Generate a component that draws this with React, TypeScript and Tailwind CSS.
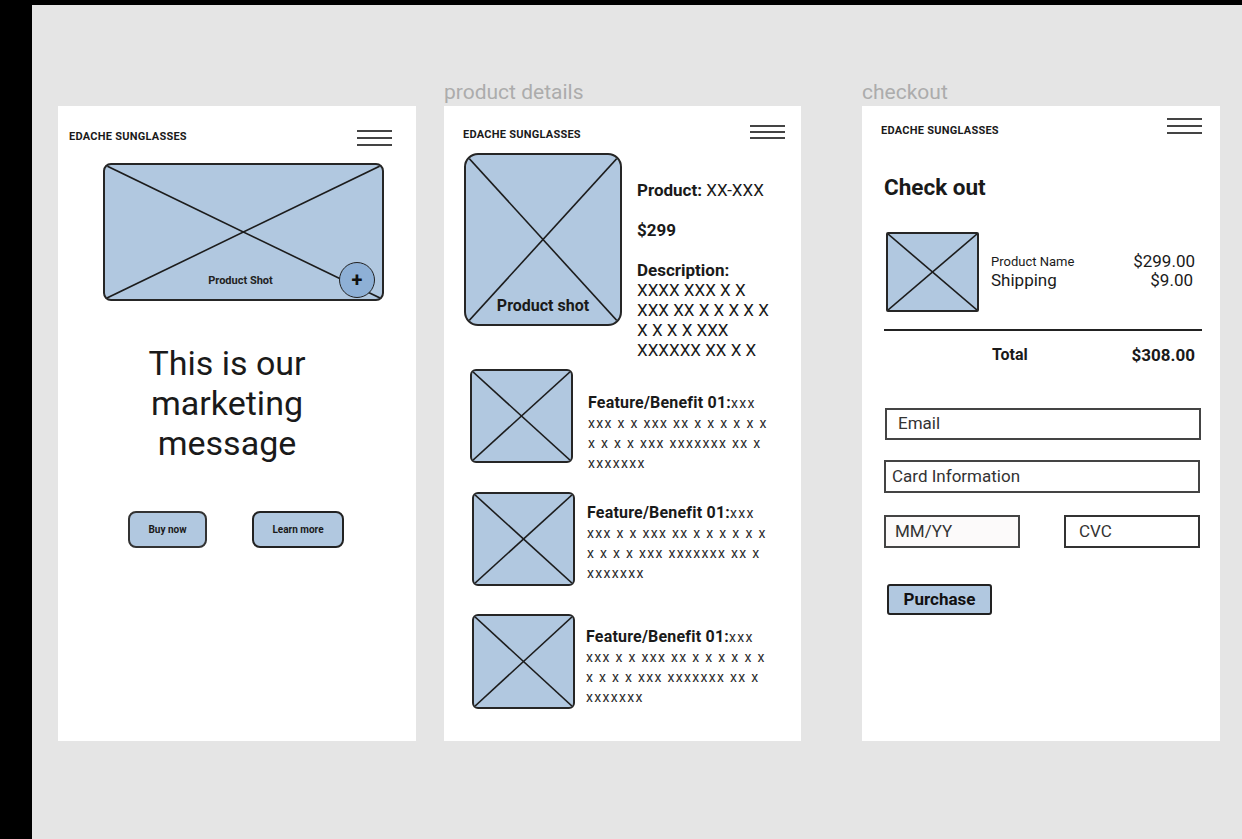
import React from "react";
import clsx from "clsx";

const XBox = ({ className, children }: { className?: string; children?: React.ReactNode }) => (
  <div className={clsx("relative shrink-0 overflow-hidden border-2 border-[#262626] bg-[#b1c8e0]", className)}>
    <svg className="absolute inset-0 h-full w-full" viewBox="0 0 100 100" preserveAspectRatio="none">
      <line x1="0" y1="0" x2="100" y2="100" stroke="#1c1c1c" strokeWidth="1.6" vectorEffect="non-scaling-stroke" />
      <line x1="100" y1="0" x2="0" y2="100" stroke="#1c1c1c" strokeWidth="1.6" vectorEffect="non-scaling-stroke" />
    </svg>
    {children}
  </div>
);

const Hamburger = ({ className }: { className?: string }) => (
  <div className={clsx("flex w-[35px] flex-col", className)}>
    <span className="h-[2px] bg-[#444]" />
    <span className="h-[2px] bg-[#444]" />
    <span className="h-[2px] bg-[#444]" />
  </div>
);

const Brand = ({ className }: { className?: string }) => (
  <span className={clsx("text-[11px] font-bold leading-[13px] tracking-[0.25px] text-[#1a1a1a]", className)}>
    EDACHE SUNGLASSES
  </span>
);

const HomeScreen = () => (
  <div className="flex h-[635px] flex-col bg-white">
    <div className="flex items-start justify-between pl-[11px] pr-[24px]">
      <Brand className="mt-[24px]" />
      <Hamburger className="mt-[24px] gap-[5px]" />
    </div>
    <XBox className="ml-[45px] mt-[17px] h-[138px] w-[281px] rounded-[8px]">
      <span className="absolute inset-x-0 bottom-[11px] pr-[6px] text-center text-[11px] font-bold leading-[14px] text-[#222]">
        Product Shot
      </span>
      <span className="absolute bottom-[1px] right-[7px] flex h-[36px] w-[36px] items-center justify-center rounded-full border-[1.5px] border-[#222] bg-[#8eb0d6] text-[20px] font-bold leading-none text-[#111]">
        +
      </span>
    </XBox>
    <p className="mt-[42px] pr-[20px] text-center text-[34px] leading-[40px] text-[#1a1a1a]">
      This is our
      <br />
      marketing
      <br />
      message
    </p>
    <div className="mt-[48px] flex pl-[70px]">
      <button className="h-[37px] w-[79px] rounded-[8px] border-2 border-[#333] bg-[#b1c8e0] text-[10px] font-bold text-[#1a1a1a]">
        Buy now
      </button>
      <button className="ml-[45px] h-[37px] w-[92px] rounded-[8px] border-2 border-[#222] bg-[#b1c8e0] text-[10px] font-bold text-[#1a1a1a]">
        Learn more
      </button>
    </div>
  </div>
);

const features = [
  { row: "mt-[9px]", box: "ml-[26px] h-[94px]", text: "ml-[15px] mt-[24px]" },
  { row: "mt-[19px]", box: "ml-[28px] h-[94px]", text: "ml-[12px] mt-[11px]" },
  { row: "mt-[28px]", box: "ml-[28px] h-[95px]", text: "ml-[11px] mt-[13px]" },
];

const DetailsScreen = () => (
  <div className="flex h-[635px] flex-col bg-white text-[#1a1a1a]">
    <div className="flex items-start justify-between pl-[19px] pr-[16px]">
      <Brand className="mt-[22px]" />
      <Hamburger className="mt-[19px] gap-[4px]" />
    </div>
    <div className="mt-[12px] flex">
      <XBox className="ml-[20px] h-[173px] w-[158px] rounded-[14px]">
        <span className="absolute inset-x-0 bottom-[8px] text-center text-[16px] font-bold leading-[20px]">
          Product shot
        </span>
      </XBox>
      <div className="ml-[15px] pt-[27px] text-[17px] leading-[20px]">
        <p>
          <span className="font-bold">Product:</span> XX-XXX
        </p>
        <p className="mt-[20px] font-bold">$299</p>
        <p className="mt-[20px] font-bold">Description:</p>
        <p>XXXX XXX X X</p>
        <p>XXX XX X X X X X</p>
        <p>X X X X XXX</p>
        <p>XXXXXX XX X X</p>
      </div>
    </div>
    {features.map((f, i) => (
      <div key={i} className={clsx("flex items-start", f.row)}>
        <XBox className={clsx("w-[103px] rounded-[6px]", f.box)} />
        <div className={clsx("text-[14px] leading-[20px] tracking-[1.3px] text-[#2a2a2a]", f.text)}>
          <p>
            <span className="text-[16px] font-bold tracking-[0.2px] text-[#1a1a1a]">Feature/Benefit 01:</span>xxx
          </p>
          <p>xxx x x xxx xx x x x x x x</p>
          <p>x x x x xxx xxxxxxx xx x</p>
          <p>xxxxxxx</p>
        </div>
      </div>
    ))}
  </div>
);

const CheckoutScreen = () => (
  <div className="flex h-[635px] flex-col bg-white text-[#1a1a1a]">
    <div className="flex items-start justify-between pl-[19px] pr-[18px]">
      <Brand className="mt-[18px]" />
      <Hamburger className="mt-[12px] gap-[5px]" />
    </div>
    <h2 className="ml-[22px] mt-[36px] text-[22.5px] font-bold leading-[28px]">Check out</h2>
    <div className="mt-[31px] flex pl-[24px] pr-[25px]">
      <XBox className="h-[80px] w-[93px] rounded-[2px]" />
      <div className="ml-[12px] mt-[20px] flex flex-1 justify-between leading-[19px]">
        <div>
          <p className="text-[13px]">Product Name</p>
          <p className="text-[17px]">Shipping</p>
        </div>
        <div className="text-right text-[17px]">
          <p>$299.00</p>
          <p className="pr-[2px]">$9.00</p>
        </div>
      </div>
    </div>
    <div className="ml-[22px] mr-[18px] mt-[17px] h-[2px] bg-[#222]" />
    <div className="mt-[14px] flex justify-between pl-[130px] pr-[25px] font-bold leading-[20px]">
      <span className="text-[16px]">Total</span>
      <span className="text-[17px]">$308.00</span>
    </div>
    <div className="ml-[23px] mr-[19px] mt-[43px] flex h-[32px] items-center border-2 border-[#444] pl-[11px] text-[17px] text-[#333]">
      Email
    </div>
    <div className="ml-[22px] mr-[20px] mt-[20px] flex h-[33px] items-center border-2 border-[#444] pl-[6px] text-[17px] text-[#333]">
      Card Information
    </div>
    <div className="mt-[22px] flex pl-[22px]">
      <div className="flex h-[33px] w-[136px] items-center border-2 border-[#444] bg-[#fcfafa] pl-[9px] text-[17px] text-[#333]">
        MM/YY
      </div>
      <div className="ml-[44px] flex h-[33px] w-[136px] items-center border-2 border-[#333] pl-[13px] text-[17px] text-[#333]">
        CVC
      </div>
    </div>
    <button className="ml-[25px] mt-[36px] h-[31px] w-[105px] rounded-[3px] border-2 border-[#222] bg-[#b1c8e0] text-[17px] font-bold leading-none text-[#111]">
      Purchase
    </button>
  </div>
);

export default function App() {
  return (
    <div className="h-[839px] w-[1242px] overflow-hidden border-l-[32px] border-t-[5px] border-black bg-[#e5e5e5] font-[Roboto,sans-serif]">
      <div className="flex items-start pl-[26px] pt-[78px]">
        <div className="mr-[28px] flex w-[358px] flex-col">
          <div className="h-[23px]" />
          <HomeScreen />
        </div>
        <div className="mr-[61px] flex w-[357px] flex-col">
          <p className="h-[23px] text-[21px] leading-[19px] text-[#acacac]">product details</p>
          <DetailsScreen />
        </div>
        <div className="flex w-[358px] flex-col">
          <p className="h-[23px] text-[21px] leading-[19px] text-[#acacac]">checkout</p>
          <CheckoutScreen />
        </div>
      </div>
    </div>
  );
}
